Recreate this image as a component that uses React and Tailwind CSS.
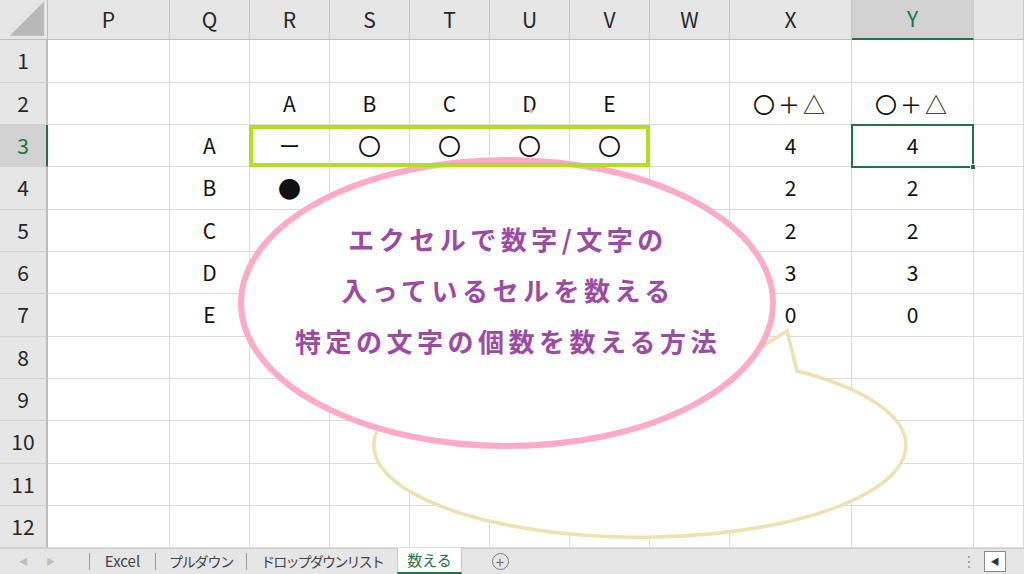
import React from 'react'

const FONT = { fontFamily: '"Noto Sans CJK JP", "Noto Sans", sans-serif' }

const colW = ['w-[48px]', 'w-[122px]', 'w-[80px]', 'w-[80px]', 'w-[80px]', 'w-[80px]', 'w-[80px]', 'w-[80px]', 'w-[80px]', 'w-[122px]', 'w-[122px]', 'w-[50px]']
const colNames = ['', 'P', 'Q', 'R', 'S', 'T', 'U', 'V', 'W', 'X', 'Y', '']
const rowH = ['h-[43px]', 'h-[42px]', 'h-[42px]', 'h-[43px]', 'h-[42px]', 'h-[42px]', 'h-[43px]', 'h-[42px]', 'h-[42px]', 'h-[43px]', 'h-[42px]', 'h-[42px]']

const sym = '〇＋△'
const cells = {
  2: { 3: 'A', 4: 'B', 5: 'C', 6: 'D', 7: 'E', 9: sym, 10: sym },
  3: { 2: 'A', 3: 'ー', 4: '〇', 5: '〇', 6: '〇', 7: '〇', 9: '4', 10: '4' },
  4: { 2: 'B', 3: '●', 9: '2', 10: '2' },
  5: { 2: 'C', 9: '2', 10: '2' },
  6: { 2: 'D', 9: '3', 10: '3' },
  7: { 2: 'E', 9: '0', 10: '0' },
}

function HeaderRow() {
  return (
    <div className="flex h-[40px]">
      <div className="w-[48px] h-full bg-[#e6e6e6] border-r border-b border-[#bdbdbd] flex items-end justify-end">
        <svg width="48" height="40" viewBox="0 0 48 40">
          <polygon points="10,37 45,37 45,2" fill="#b8b8b8" />
        </svg>
      </div>
      {colNames.slice(1).map((name, i) => {
        const sel = name === 'Y'
        return (
          <div
            key={i}
            className={
              colW[i + 1] +
              ' h-full flex items-center justify-center text-[21px] border-r border-[#c6c6c6] ' +
              (sel ? 'bg-[#d2d2d2] text-[#217346] border-b-2 border-b-[#217346]' : 'bg-[#e6e6e6] text-[#262626] border-b border-b-[#bdbdbd]')
            }
          >
            {name}
          </div>
        )
      })}
    </div>
  )
}

function Row({ n }) {
  const data = cells[n] || {}
  const sel = n === 3
  return (
    <div className={'flex ' + rowH[n - 1]}>
      <div
        className={
          'w-[48px] h-full flex items-center justify-center text-[21px] border-b border-[#d0d0d0] ' +
          (sel ? 'bg-[#d2d2d2] text-[#217346] border-r-2 border-r-[#217346]' : 'bg-[#e6e6e6] text-[#262626] border-r-2 border-r-[#bdbdbd]')
        }
      >
        {n}
      </div>
      {colNames.slice(1).map((_, i) => {
        const c = i + 1
        const v = data[c]
        let extra = 'text-[21px]'
        if (v === sym) extra = 'text-[22px] tracking-[3px]'
        else if (v === '〇' || v === '●') extra = 'text-[23px]'
        return (
          <div
            key={c}
            className={colW[c] + ' h-full flex items-center justify-center bg-white text-[#111] border-r border-b border-[#dcdcdc] ' + extra}
          >
            {v}
          </div>
        )
      })}
    </div>
  )
}

function Overlays() {
  return (
    <>
      <svg className="absolute left-0 top-0 pointer-events-none" width="1024" height="548" viewBox="0 0 1024 548">
        <path
          d="M 740 360 L 787 331 L 797 371 A 266 92 0 1 1 740 360 Z"
          fill="#ffffff"
          stroke="#efe2b0"
          strokeWidth="3.5"
          strokeLinejoin="miter"
        />
        <ellipse cx="507" cy="303" rx="266" ry="143" fill="#ffffff" stroke="#ffaac9" strokeWidth="6" />
        <circle cx="531" cy="111" r="2" fill="#ff9fc0" />
      </svg>
      <div className="absolute left-[249px] top-[125px] w-[401px] h-[42px] border-4 border-[#b3e01c]" />
      <div className="absolute left-[851px] top-[124px] w-[123px] h-[44px] border-2 border-[#217346]">
        <div className="absolute -right-[4px] -bottom-[4px] w-[6px] h-[6px] bg-[#217346] border border-white" />
      </div>
      <div className="absolute left-[238px] top-[213px] w-[540px] flex flex-col items-center text-[#9c4aa6] text-[26px] font-bold tracking-[4.5px] leading-[51px]">
        <div>エクセルで数字/文字の</div>
        <div>入っているセルを数える</div>
        <div>特定の文字の個数を数える方法</div>
      </div>
    </>
  )
}

function TabBar() {
  return (
    <div className="h-[26px] flex items-stretch bg-[#e6e6e6] border-t border-[#cfcfcf] text-[14px] text-[#444]">
      <div className="w-[89px] flex items-center text-[9px] text-[#c0c0c0]">
        <span className="ml-[19px]">◀</span>
        <span className="ml-[18px]">▶</span>
      </div>
      <div className="w-[1px] my-[4px] bg-[#9a9a9a]" />
      <div className="w-[65px] flex items-center justify-center text-[15px]">Excel</div>
      <div className="w-[1px] my-[4px] bg-[#9a9a9a]" />
      <div className="w-[90px] flex items-center justify-center tracking-[-1.2px]">プルダウン</div>
      <div className="w-[1px] my-[4px] bg-[#9a9a9a]" />
      <div className="w-[150px] flex items-center justify-center tracking-[-1.8px]">ドロップダウンリスト</div>
      <div className="w-[65px] -mt-px flex items-center justify-center bg-white text-[#217346] text-[15px] border-x border-[#c8c8c8] border-b-2 border-b-[#217346]">
        数える
      </div>
      <div className="w-[76px] flex items-center justify-center">
        <div className="w-[17px] h-[17px] rounded-full border border-[#7a7a7a] flex items-center justify-center text-[#6a6a6a] text-[15px] leading-none">
          +
        </div>
      </div>
      <div className="flex-1" />
      <div className="w-[10px] flex flex-col items-center justify-center gap-[3px]">
        <span className="w-[2px] h-[2px] bg-[#a8a8a8]" />
        <span className="w-[2px] h-[2px] bg-[#a8a8a8]" />
        <span className="w-[2px] h-[2px] bg-[#a8a8a8]" />
      </div>
      <div className="w-[10px]" />
      <div className="w-[22px] my-[2px] bg-white border border-[#8a8a8a] flex items-center justify-center text-[9px] text-[#333]">◀</div>
      <div className="w-[18px]" />
    </div>
  )
}

export default function App() {
  return (
    <div className="w-[1024px] h-[574px] overflow-hidden bg-white flex flex-col" style={FONT}>
      <div className="relative h-[548px] overflow-hidden">
        <HeaderRow />
        {Array.from({ length: 12 }, (_, i) => (
          <Row key={i} n={i + 1} />
        ))}
        <Overlays />
      </div>
      <TabBar />
    </div>
  )
}
